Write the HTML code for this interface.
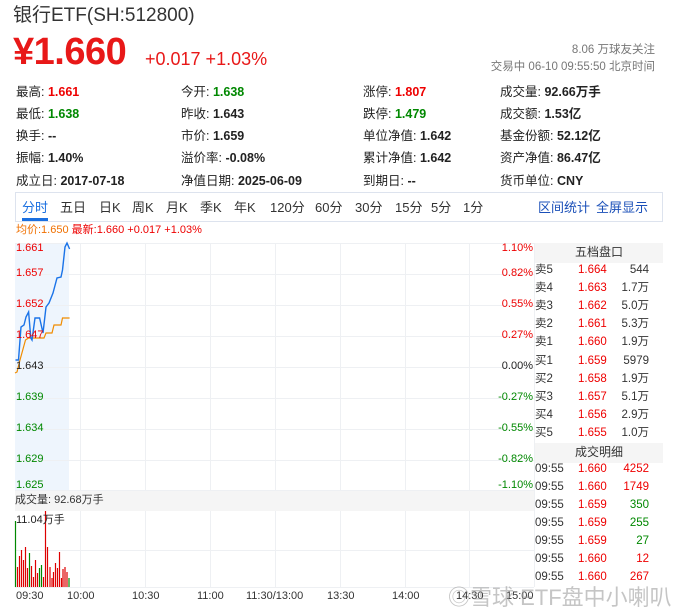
<!DOCTYPE html>
<html><head><meta charset="utf-8"><style>
*{margin:0;padding:0;box-sizing:border-box}
body{width:682px;height:615px;background:#fff;position:relative;overflow:hidden;font-family:"Liberation Sans","Noto Sans CJK SC",sans-serif;color:#333}
.a{position:absolute;white-space:nowrap;line-height:15px}
.r{color:#e00}.g{color:#080}
.info{font-size:12.5px;color:#222}
.info b{font-weight:bold}
.tab{font-size:13px;color:#333;top:200px}
.ob{font-size:11.5px}
.yl{font-size:11px}
</style></head><body>
<div class="a" style="left:13px;top:4px;font-size:19px;line-height:24px;color:#333">银行ETF(SH:512800)</div>
<div class="a" style="left:13px;top:30px;font-size:38px;line-height:44px;font-weight:bold;color:#e81818;letter-spacing:-0.5px">¥1.660</div>
<div class="a" style="left:145px;top:48px;font-size:18px;line-height:22px;color:#e81818">+0.017 +1.03%</div>
<div class="a" style="right:27px;top:43px;font-size:11.5px;color:#777">8.06 万球友关注</div>
<div class="a" style="right:27px;top:60px;font-size:11.5px;color:#777">交易中 06-10 09:55:50 北京时间</div>

<div class="info">
<div class="a" style="left:16px;top:85px">最高: <b class="r">1.661</b></div>
<div class="a" style="left:16px;top:107px">最低: <b class="g">1.638</b></div>
<div class="a" style="left:16px;top:129px">换手: <b>--</b></div>
<div class="a" style="left:16px;top:151px">振幅: <b>1.40%</b></div>
<div class="a" style="left:16px;top:174px">成立日: <b>2017-07-18</b></div>
<div class="a" style="left:181px;top:85px">今开: <b class="g">1.638</b></div>
<div class="a" style="left:181px;top:107px">昨收: <b>1.643</b></div>
<div class="a" style="left:181px;top:129px">市价: <b>1.659</b></div>
<div class="a" style="left:181px;top:151px">溢价率: <b>-0.08%</b></div>
<div class="a" style="left:181px;top:174px">净值日期: <b>2025-06-09</b></div>
<div class="a" style="left:363px;top:85px">涨停: <b class="r">1.807</b></div>
<div class="a" style="left:363px;top:107px">跌停: <b class="g">1.479</b></div>
<div class="a" style="left:363px;top:129px">单位净值: <b>1.642</b></div>
<div class="a" style="left:363px;top:151px">累计净值: <b>1.642</b></div>
<div class="a" style="left:363px;top:174px">到期日: <b>--</b></div>
<div class="a" style="left:500px;top:85px">成交量: <b>92.66万手</b></div>
<div class="a" style="left:500px;top:107px">成交额: <b>1.53亿</b></div>
<div class="a" style="left:500px;top:129px">基金份额: <b>52.12亿</b></div>
<div class="a" style="left:500px;top:151px">资产净值: <b>86.47亿</b></div>
<div class="a" style="left:500px;top:174px">货币单位: <b>CNY</b></div>
</div>

<div class="a" style="left:15px;top:192px;width:648px;height:30px;border:1px solid #dde3ee"></div>
<div class="a" style="left:22px;top:218px;width:26px;height:3px;background:#1a6fe0"></div>
<div class="a tab" style="left:22px;color:#1a6fe0">分时</div>
<div class="a tab" style="left:60px">五日</div>
<div class="a tab" style="left:99px">日K</div>
<div class="a tab" style="left:132px">周K</div>
<div class="a tab" style="left:166px">月K</div>
<div class="a tab" style="left:200px">季K</div>
<div class="a tab" style="left:234px">年K</div>
<div class="a tab" style="left:270px">120分</div>
<div class="a tab" style="left:315px">60分</div>
<div class="a tab" style="left:355px">30分</div>
<div class="a tab" style="left:395px">15分</div>
<div class="a tab" style="left:431px">5分</div>
<div class="a tab" style="left:463px">1分</div>
<div class="a tab" style="left:538px;color:#1a4fb8">区间统计</div>
<div class="a tab" style="left:596px;color:#1a4fb8">全屏显示</div>

<div class="a" style="left:16px;top:223px;font-size:11px"><span style="color:#f07000">均价:1.650</span> <span style="color:#e00">最新:1.660 +0.017 +1.03%</span></div>

<svg class="a" style="left:0;top:0" width="682" height="615">
<rect x="15" y="243" width="54" height="248" fill="#eef5fd"/>
<g stroke="#eef0f3" stroke-width="1">
<line x1="15" y1="243.5" x2="534" y2="243.5"/><line x1="15" y1="274.5" x2="534" y2="274.5"/><line x1="15" y1="305.5" x2="534" y2="305.5"/><line x1="15" y1="336.5" x2="534" y2="336.5"/><line x1="15" y1="367.5" x2="534" y2="367.5"/><line x1="15" y1="398.5" x2="534" y2="398.5"/><line x1="15" y1="429.5" x2="534" y2="429.5"/><line x1="15" y1="460.5" x2="534" y2="460.5"/><line x1="15" y1="490.5" x2="534" y2="490.5"/>
<line x1="15" y1="550.5" x2="534" y2="550.5"/><line x1="15" y1="587.5" x2="534" y2="587.5"/>
<line x1="80.5" y1="243" x2="80.5" y2="587"/><line x1="145.5" y1="243" x2="145.5" y2="587"/><line x1="210.5" y1="243" x2="210.5" y2="587"/><line x1="275.5" y1="243" x2="275.5" y2="587"/><line x1="340.5" y1="243" x2="340.5" y2="587"/><line x1="405.5" y1="243" x2="405.5" y2="587"/><line x1="469.5" y1="243" x2="469.5" y2="587"/><line x1="534.5" y1="243" x2="534.5" y2="587"/>
</g>
<rect x="15" y="491" width="519" height="20" fill="#f5f5f5"/>
<polyline fill="none" stroke="#f08c00" stroke-width="1.2" points="15,373 17,372 20,360 25.5,340 28.6,338 44,338 46,333 52,333 54,325 61,325 62.5,318 69.6,318"/>
<polyline fill="none" stroke="#1a73e8" stroke-width="1.4" points="15.5,360 18.5,360 21,327 24,325 26,317 28.6,312 30.8,338 32,340 35,318 39.6,318 43,333 46,307 49,303 53,293 57,278 61,277 62.5,270 65,247 67,243 69.6,249"/>
<g stroke-width="1.2">
<line x1="15.5" y1="587" x2="15.5" y2="521" stroke="#080"/>
<line x1="17.5" y1="587" x2="17.5" y2="567" stroke="#d00"/>
<line x1="19.5" y1="587" x2="19.5" y2="556" stroke="#d00"/>
<line x1="21.5" y1="587" x2="21.5" y2="550" stroke="#d00"/>
<line x1="23.5" y1="587" x2="23.5" y2="560" stroke="#d00"/>
<line x1="25.5" y1="587" x2="25.5" y2="547" stroke="#d00"/>
<line x1="27.5" y1="587" x2="27.5" y2="568" stroke="#d00"/>
<line x1="29.5" y1="587" x2="29.5" y2="553" stroke="#080"/>
<line x1="31.5" y1="587" x2="31.5" y2="566" stroke="#d00"/>
<line x1="33.5" y1="587" x2="33.5" y2="577" stroke="#d00"/>
<line x1="35.5" y1="587" x2="35.5" y2="560" stroke="#d00"/>
<line x1="37.5" y1="587" x2="37.5" y2="573" stroke="#d00"/>
<line x1="39.5" y1="587" x2="39.5" y2="568" stroke="#080"/>
<line x1="41.5" y1="587" x2="41.5" y2="565" stroke="#080"/>
<line x1="43.5" y1="587" x2="43.5" y2="577" stroke="#d00"/>
<line x1="45.5" y1="587" x2="45.5" y2="511" stroke="#d00"/>
<line x1="47.5" y1="587" x2="47.5" y2="547" stroke="#d00"/>
<line x1="50" y1="587" x2="50" y2="567" stroke="#d00"/>
<line x1="52" y1="587" x2="52" y2="578" stroke="#d00"/>
<line x1="53.5" y1="587" x2="53.5" y2="572" stroke="#d00"/>
<line x1="55.5" y1="587" x2="55.5" y2="563" stroke="#d00"/>
<line x1="57.5" y1="587" x2="57.5" y2="568" stroke="#d00"/>
<line x1="59.5" y1="587" x2="59.5" y2="552" stroke="#d00"/>
<line x1="61.5" y1="587" x2="61.5" y2="578" stroke="#d00"/>
<line x1="63" y1="587" x2="63" y2="569" stroke="#d00"/>
<line x1="65" y1="587" x2="65" y2="567" stroke="#d00"/>
<line x1="67" y1="587" x2="67" y2="572" stroke="#d00"/>
<line x1="69" y1="587" x2="69" y2="578" stroke="#080"/>
</g>
<rect x="535" y="243" width="128" height="20" fill="#f5f5f5"/>
<rect x="535" y="443" width="128" height="20" fill="#f5f5f5"/>
</svg>

<div class="yl">
<div class="a r" style="left:16px;top:241px">1.661</div>
<div class="a r" style="left:16px;top:266px">1.657</div>
<div class="a r" style="left:16px;top:297px">1.652</div>
<div class="a r" style="left:16px;top:328px">1.647</div>
<div class="a" style="left:16px;top:359px;color:#222">1.643</div>
<div class="a g" style="left:16px;top:390px">1.639</div>
<div class="a g" style="left:16px;top:421px">1.634</div>
<div class="a g" style="left:16px;top:452px">1.629</div>
<div class="a g" style="left:16px;top:478px">1.625</div>
<div class="a r" style="right:149px;top:241px">1.10%</div>
<div class="a r" style="right:149px;top:266px">0.82%</div>
<div class="a r" style="right:149px;top:297px">0.55%</div>
<div class="a r" style="right:149px;top:328px">0.27%</div>
<div class="a" style="right:149px;top:359px;color:#222">0.00%</div>
<div class="a g" style="right:149px;top:390px">-0.27%</div>
<div class="a g" style="right:149px;top:421px">-0.55%</div>
<div class="a g" style="right:149px;top:452px">-0.82%</div>
<div class="a g" style="right:149px;top:478px">-1.10%</div>
<div class="a" style="left:15px;top:493px;color:#333">成交量: 92.68万手</div>
<div class="a" style="left:16px;top:513px;color:#222">11.04万手</div>
<div class="a" style="left:16px;top:589px">09:30</div>
<div class="a" style="left:67px;top:589px">10:00</div>
<div class="a" style="left:132px;top:589px">10:30</div>
<div class="a" style="left:197px;top:589px">11:00</div>
<div class="a" style="left:246px;top:589px">11:30/13:00</div>
<div class="a" style="left:327px;top:589px">13:30</div>
<div class="a" style="left:392px;top:589px">14:00</div>
<div class="a" style="left:456px;top:589px">14:30</div>
<div class="a" style="left:506px;top:589px">15:00</div>
</div>
<div class="a" style="left:448px;top:585px;font-size:22px;line-height:26px;color:rgba(150,150,150,0.55)">◎雪球 ETF盘中小喇叭</div>

<div class="ob">
<div class="a" style="left:535px;top:245px;width:128px;text-align:center;font-size:12px">五档盘口</div>
<div class="a" style="left:535px;top:445px;width:128px;text-align:center;font-size:12px">成交明细</div>
</div>
<div class="ob">
<div class="a" style="left:535px;top:263px">卖5</div><div class="a r" style="left:578px;top:263px">1.664</div><div class="a" style="right:33px;top:263px">544</div>
<div class="a" style="left:535px;top:281px">卖4</div><div class="a r" style="left:578px;top:281px">1.663</div><div class="a" style="right:33px;top:281px">1.7万</div>
<div class="a" style="left:535px;top:299px">卖3</div><div class="a r" style="left:578px;top:299px">1.662</div><div class="a" style="right:33px;top:299px">5.0万</div>
<div class="a" style="left:535px;top:317px">卖2</div><div class="a r" style="left:578px;top:317px">1.661</div><div class="a" style="right:33px;top:317px">5.3万</div>
<div class="a" style="left:535px;top:335px">卖1</div><div class="a r" style="left:578px;top:335px">1.660</div><div class="a" style="right:33px;top:335px">1.9万</div>
<div class="a" style="left:535px;top:354px">买1</div><div class="a r" style="left:578px;top:354px">1.659</div><div class="a" style="right:33px;top:354px">5979</div>
<div class="a" style="left:535px;top:372px">买2</div><div class="a r" style="left:578px;top:372px">1.658</div><div class="a" style="right:33px;top:372px">1.9万</div>
<div class="a" style="left:535px;top:390px">买3</div><div class="a r" style="left:578px;top:390px">1.657</div><div class="a" style="right:33px;top:390px">5.1万</div>
<div class="a" style="left:535px;top:408px">买4</div><div class="a r" style="left:578px;top:408px">1.656</div><div class="a" style="right:33px;top:408px">2.9万</div>
<div class="a" style="left:535px;top:426px">买5</div><div class="a r" style="left:578px;top:426px">1.655</div><div class="a" style="right:33px;top:426px">1.0万</div>
<div class="a" style="left:535px;top:462px">09:55</div><div class="a r" style="left:578px;top:462px">1.660</div><div class="a r" style="right:33px;top:462px">4252</div>
<div class="a" style="left:535px;top:480px">09:55</div><div class="a r" style="left:578px;top:480px">1.660</div><div class="a r" style="right:33px;top:480px">1749</div>
<div class="a" style="left:535px;top:498px">09:55</div><div class="a r" style="left:578px;top:498px">1.659</div><div class="a g" style="right:33px;top:498px">350</div>
<div class="a" style="left:535px;top:516px">09:55</div><div class="a r" style="left:578px;top:516px">1.659</div><div class="a g" style="right:33px;top:516px">255</div>
<div class="a" style="left:535px;top:534px">09:55</div><div class="a r" style="left:578px;top:534px">1.659</div><div class="a g" style="right:33px;top:534px">27</div>
<div class="a" style="left:535px;top:552px">09:55</div><div class="a r" style="left:578px;top:552px">1.660</div><div class="a r" style="right:33px;top:552px">12</div>
<div class="a" style="left:535px;top:570px">09:55</div><div class="a r" style="left:578px;top:570px">1.660</div><div class="a r" style="right:33px;top:570px">267</div>
</div>
</body></html>
